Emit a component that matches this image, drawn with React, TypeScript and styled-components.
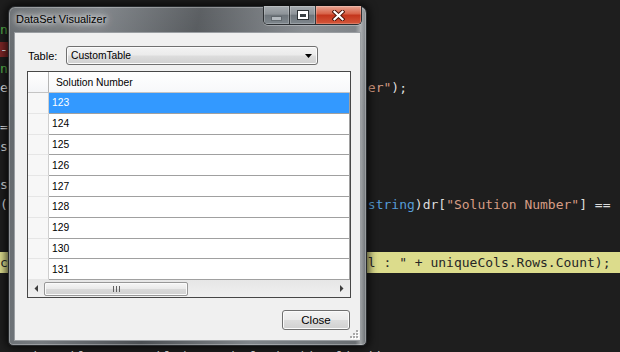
import styled, { createGlobalStyle } from 'styled-components';

const GlobalStyle = createGlobalStyle`
  html, body {
    margin: 0;
    padding: 0;
    background: #1e1e1e;
  }
  #root {
    width: 620px;
    height: 352px;
  }
`;

type Kind = 'plain' | 'str' | 'kw' | 'type' | 'bp';
type Tok = [string, Kind?];

interface CodeLine {
  lead?: Tok[];
  tail?: Tok[];
  full?: Tok[];
  hl?: boolean;
  shift?: number;
}

// editor lines behind the dialog; lead = the column that peeks out on the left,
// tail = what shows right of the window (starts at column 47)
const LINES: CodeLine[] = [
  {},
  { lead: [['n', 'type']] },
  { lead: [['-t', 'bp']] },
  { lead: [['n', 'type']] },
  { lead: [['e']], tail: [['er"', 'str'], [');']] },
  {},
  { lead: [['=']] },
  { lead: [['s']] },
  {},
  { lead: [['s']] },
  {
    lead: [['(']],
    tail: [['string', 'kw'], [')dr['], ['"Solution Number"', 'str'], ['] ==']],
  },
  {},
  {},
  { hl: true, lead: [['ca']], tail: [['l : " + uniqueCols.Rows.Count);']] },
  {},
  {},
  {},
  {},
  { shift: -3, full: [['  uniqueTbl = DataTable(IBoundSolution(dv, list));']] },
];

const ROWS = ['123', '124', '125', '126', '127', '128', '129', '130', '131'];

const tokColor: Record<Kind, string> = {
  plain: '#dcdcdc',
  str: '#d69d85',
  kw: '#569cd6',
  type: '#57b24a',
  bp: '#f0f0f0',
};

const Screen = styled.div`
  position: relative;
  width: 620px;
  height: 352px;
  overflow: hidden;
  background: #1e1e1e;
`;

const Editor = styled.div`
  padding-top: 0.7px;
  font-family: 'DejaVu Sans Mono', 'Liberation Mono', monospace;
  font-size: 13px;
  color: #dcdcdc;
`;

const Line = styled.div<{ $shift?: number }>`
  height: 19.4px;
  line-height: 19.4px;
  white-space: pre;
  margin-top: ${(p) => p.$shift ?? 0}px;
`;

const Run = styled.span<{ $hl?: boolean }>`
  display: inline-block;
  height: 21px;
  margin-top: -0.8px;
  line-height: 21px;
  vertical-align: top;
  padding-right: ${(p) => (p.$hl ? 12 : 0)}px;
  background: ${(p) => (p.$hl ? '#dcdc8c' : 'transparent')};
`;

const Lead = styled.span`
  display: inline-block;
  width: 47ch;
  overflow: hidden;
  vertical-align: top;
`;

const Tk = styled.span<{ $kind: Kind; $hl?: boolean }>`
  color: ${(p) => (p.$hl ? '#262626' : tokColor[p.$kind])};
  background: ${(p) => (p.$kind === 'bp' ? '#7c2626' : 'transparent')};
`;

const Window = styled.div`
  position: absolute;
  left: 8px;
  top: 6px;
  width: 359px;
  height: 340px;
  box-sizing: border-box;
  display: flex;
  flex-direction: column;
  padding: 0 5px 4px 5px;
  border: 1px solid #26292c;
  border-radius: 7px 7px 5px 5px;
  background: linear-gradient(
      90deg,
      rgba(255, 255, 255, 0) 97%,
      rgba(255, 255, 255, 0.35) 98.5%,
      rgba(255, 255, 255, 0) 100%
    ),
    linear-gradient(180deg, rgba(255, 255, 255, 0.1) 0%, rgba(255, 255, 255, 0) 30%),
    linear-gradient(100deg, #5d6266 0%, #767b80 22%, #4b4f53 46%, #80858a 72%, #676c70 100%);
  box-shadow: 0 0 9px 2px rgba(0, 0, 0, 0.75), inset 0 0 0 1px rgba(255, 255, 255, 0.28);
  font-family: 'Liberation Sans', Arial, sans-serif;
  font-size: 11px;
  color: #000;
`;

const TitleBar = styled.div`
  height: 25px;
  display: flex;
  align-items: flex-start;
  justify-content: space-between;
  flex-shrink: 0;
`;

const Title = styled.div`
  padding-left: 2px;
  line-height: 25px;
  font-size: 11px;
  text-shadow: 0 0 5px #fff, 0 0 9px rgba(255, 255, 255, 0.85), 0 0 14px rgba(255, 255, 255, 0.6);
`;

const Caption = styled.div`
  display: flex;
  margin-top: -1px;
  margin-right: -1px;
  height: 18px;
  border: 1px solid #2b2e31;
  border-top: none;
  border-radius: 0 0 5px 5px;
  overflow: hidden;
  box-shadow: 0 1px 0 rgba(255, 255, 255, 0.3);
`;

const CapButton = styled.div<{ $close?: boolean; $w: number }>`
  width: ${(p) => p.$w}px;
  display: flex;
  align-items: center;
  justify-content: center;
  box-sizing: border-box;
  border-right: ${(p) => (p.$close ? 'none' : '1px solid #34383b')};
  box-shadow: inset 0 0 0 1px rgba(255, 255, 255, 0.22);
  background: ${(p) =>
    p.$close
      ? 'linear-gradient(180deg, #e8a694 0%, #d8644a 42%, #c4361d 52%, #d4573a 100%)'
      : 'linear-gradient(180deg, #a7acb0 0%, #8d9398 45%, #6e757b 52%, #7f878d 100%)'};
`;

const Client = styled.div`
  position: relative;
  flex: 1;
  display: flex;
  flex-direction: column;
  box-sizing: border-box;
  padding: 13px 9px 10px 12px;
  background: #f0f0f0;
  border: 1px solid #9a9ea2;
`;

const TableRow = styled.div`
  display: flex;
  align-items: center;
  height: 19px;
  padding-left: 1px;
  flex-shrink: 0;
`;

const Label = styled.div`
  width: 38px;
  flex-shrink: 0;
`;

const Win7Face = `
  box-sizing: border-box;
  border: 1px solid #707070;
  border-radius: 3px;
  background: linear-gradient(180deg, #f3f3f3 0%, #ebebeb 48%, #dddddd 52%, #d0d0d0 100%);
  box-shadow: inset 0 0 0 1px #fbfbfb;
`;

const Combo = styled.div`
  ${Win7Face}
  width: 252px;
  height: 19px;
  display: flex;
  align-items: center;
  justify-content: space-between;
  padding: 0 5px 0 4px;
  font-size: 10.3px;
`;

const Grid = styled.div`
  margin-top: 6px;
  height: 227px;
  box-sizing: border-box;
  border: 1px solid #474747;
  background: #fff;
  display: flex;
  flex-direction: column;
  font-size: 10.3px;
`;

const GridRow = styled.div<{ $h: number }>`
  display: flex;
  height: ${(p) => p.$h}px;
  flex-shrink: 0;
`;

const RowHead = styled.div<{ $top?: boolean }>`
  width: 21px;
  flex-shrink: 0;
  box-sizing: border-box;
  border-right: 1px solid ${(p) => (p.$top ? '#b5b5b5' : '#cfcfcf')};
  border-bottom: 1px solid ${(p) => (p.$top ? '#c4c4c4' : '#e6e6e6')};
  background: ${(p) => (p.$top ? 'linear-gradient(180deg, #ffffff, #f4f5f7)' : '#f7f7f7')};
`;

const ColHead = styled.div`
  flex: 1;
  box-sizing: border-box;
  padding-left: 7px;
  display: flex;
  align-items: center;
  border-bottom: 1px solid #c4c4c4;
  background: linear-gradient(180deg, #ffffff 0%, #f7f8fa 100%);
`;

const Cell = styled.div<{ $sel?: boolean }>`
  flex: 1;
  box-sizing: border-box;
  padding-left: 3px;
  display: flex;
  align-items: center;
  border-bottom: 1px solid #a0a0a0;
  border-right: 1px solid #a0a0a0;
  background: ${(p) => (p.$sel ? '#3399ff' : '#fff')};
  color: ${(p) => (p.$sel ? '#fff' : '#000')};
`;

const HScroll = styled.div`
  height: 17px;
  flex-shrink: 0;
  display: flex;
  align-items: center;
  background: linear-gradient(180deg, #e6e6e6 0%, #f0f0f0 100%);
`;

const ScrollArrow = styled.div`
  width: 16px;
  height: 17px;
  flex-shrink: 0;
  display: flex;
  align-items: center;
  justify-content: center;
`;

const ScrollTrack = styled.div`
  flex: 1;
  height: 17px;
  display: flex;
  align-items: center;
`;

const Thumb = styled.div<{ $w: number }>`
  width: ${(p) => p.$w}px;
  height: 14px;
  box-sizing: border-box;
  border: 1px solid #979797;
  border-radius: 2px;
  background: linear-gradient(180deg, #f6f6f6 0%, #e9e9e9 50%, #d9d9d9 51%, #d2d2d2 100%);
  box-shadow: inset 0 0 0 1px #fafafa;
  display: flex;
  align-items: center;
  justify-content: center;
`;

const Footer = styled.div`
  margin-top: 12px;
  display: flex;
  justify-content: flex-end;
  padding-right: 1px;
`;

const Button = styled.div`
  ${Win7Face}
  width: 68px;
  height: 20px;
  display: flex;
  align-items: center;
  justify-content: center;
  font-size: 11.5px;
`;

const Grip = styled.svg`
  position: absolute;
  right: 1px;
  bottom: 1px;
`;

function CodeRun({ toks, hl }: { toks: Tok[]; hl?: boolean }) {
  return (
    <>
      {toks.map(([text, kind], i) => (
        <Tk key={i} $kind={kind ?? 'plain'} $hl={hl}>
          {text}
        </Tk>
      ))}
    </>
  );
}

export default function App() {
  return (
    <Screen>
      <GlobalStyle />

      {/* code editor behind the dialog */}
      <Editor>
        {LINES.map((line, i) => (
          <Line key={i} $shift={line.shift}>
            {line.full ? (
              <CodeRun toks={line.full} />
            ) : (
              <Run $hl={line.hl}>
                <Lead>{line.lead && <CodeRun toks={line.lead} hl={line.hl} />}</Lead>
                {line.tail && <CodeRun toks={line.tail} hl={line.hl} />}
              </Run>
            )}
          </Line>
        ))}
      </Editor>

      {/* dialog */}
      <Window>
        <TitleBar>
          <Title>DataSet Visualizer</Title>
          <Caption>
            <CapButton $w={26}>
              <svg width="11" height="5" viewBox="0 0 11 5" style={{ marginTop: 6 }}>
                <rect x="0" y="0" width="11" height="5" fill="#555b60" opacity="0.6" />
                <rect x="1" y="1" width="9" height="3" fill="#b4babf" />
              </svg>
            </CapButton>
            <CapButton $w={26}>
              <svg width="12" height="10" viewBox="0 0 12 10">
                <rect x="0" y="0" width="12" height="10" fill="#2c3134" />
                <rect x="1" y="1" width="10" height="8" fill="#fff" />
                <rect x="3" y="4" width="6" height="3" fill="#3a4044" />
              </svg>
            </CapButton>
            <CapButton $w={45} $close>
              <svg width="13" height="11" viewBox="0 0 13 11">
                <path d="M2.5 1.8L10.5 9.2M10.5 1.8L2.5 9.2" stroke="#4a140a" strokeWidth="4" strokeLinecap="square" />
                <path d="M2.5 1.8L10.5 9.2M10.5 1.8L2.5 9.2" stroke="#fff" strokeWidth="2.2" strokeLinecap="square" />
              </svg>
            </CapButton>
          </Caption>
        </TitleBar>

        <Client>
          <TableRow>
            <Label>Table:</Label>
            <Combo>
              <span>CustomTable</span>
              <svg width="7" height="4" viewBox="0 0 7 4">
                <path d="M0 0H7L3.5 4Z" fill="#000" />
              </svg>
            </Combo>
          </TableRow>

          <Grid>
            <GridRow $h={21}>
              <RowHead $top />
              <ColHead>Solution Number</ColHead>
            </GridRow>
            {ROWS.map((n, i) => (
              <GridRow key={n} $h={20.8}>
                <RowHead />
                <Cell $sel={i === 0}>{n}</Cell>
              </GridRow>
            ))}
            <HScroll>
              <ScrollArrow>
                <svg width="4" height="7" viewBox="0 0 4 7">
                  <path d="M4 0V7L0.5 3.5Z" fill="#3c3c3c" />
                </svg>
              </ScrollArrow>
              <ScrollTrack>
                <Thumb $w={144}>
                  <svg width="7" height="6" viewBox="0 0 7 6">
                    <rect x="0" y="0" width="1" height="6" fill="#606060" />
                    <rect x="3" y="0" width="1" height="6" fill="#606060" />
                    <rect x="6" y="0" width="1" height="6" fill="#606060" />
                  </svg>
                </Thumb>
              </ScrollTrack>
              <ScrollArrow>
                <svg width="4" height="7" viewBox="0 0 4 7">
                  <path d="M0 0V7L3.5 3.5Z" fill="#3c3c3c" />
                </svg>
              </ScrollArrow>
            </HScroll>
          </Grid>

          <Footer>
            <Button>Close</Button>
          </Footer>

          <Grip width="10" height="10" viewBox="0 0 10 10">
            {[
              [7, 1],
              [4, 4],
              [7, 4],
              [1, 7],
              [4, 7],
              [7, 7],
            ].map(([x, y]) => (
              <g key={`${x}-${y}`}>
                <rect x={x + 1} y={y + 1} width="2" height="2" fill="#fff" />
                <rect x={x} y={y} width="2" height="2" fill="#a8a8a8" />
              </g>
            ))}
          </Grip>
        </Client>
      </Window>
    </Screen>
  );
}
